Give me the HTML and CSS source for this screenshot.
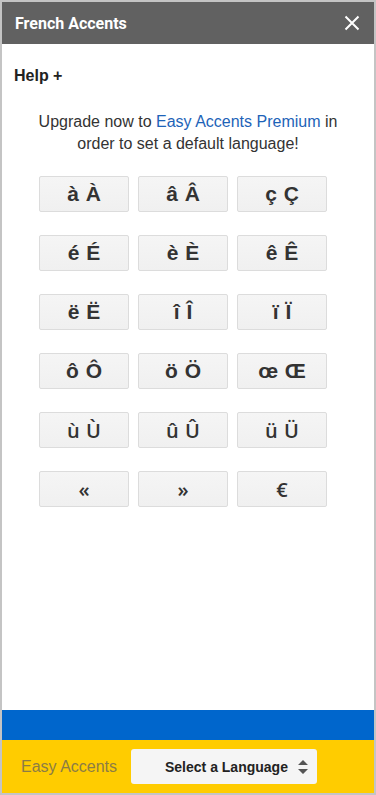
FILE: index.html
```html
<!DOCTYPE html>
<html>
<head>
<meta charset="utf-8">
<link rel="stylesheet" href="styles.css">
</head>
<body>
<div class="frame">
  <header class="header">
    <span class="title">French Accents</span>
    <svg class="close" width="16" height="16" viewBox="0 0 16 16"><path d="M1.5 1.5 L14.5 14.5 M14.5 1.5 L1.5 14.5" stroke="#fff" stroke-width="2" fill="none"/></svg>
  </header>
  <main class="content">
    <div class="help">Help +</div>
    <p class="upgrade">Upgrade now to <span class="link">Easy Accents Premium</span> in order to set a default language!</p>
    <div class="grid">
      <button class="key">à À</button>
      <button class="key">â Â</button>
      <button class="key">ç Ç</button>
      <button class="key">é É</button>
      <button class="key">è È</button>
      <button class="key">ê Ê</button>
      <button class="key">ë Ë</button>
      <button class="key">î Î</button>
      <button class="key">ï Ï</button>
      <button class="key">ô Ô</button>
      <button class="key">ö Ö</button>
      <button class="key">œ Œ</button>
      <button class="key alt">ù Ù</button>
      <button class="key alt">û Û</button>
      <button class="key alt">ü Ü</button>
      <button class="key alt">«</button>
      <button class="key alt">»</button>
      <button class="key alt">€</button>
    </div>
  </main>
  <div class="blue"></div>
  <footer class="footer">
    <span class="brand">Easy Accents</span>
    <div class="select">
      <span>Select a Language</span>
      <svg class="arrows" width="10" height="14" viewBox="0 0 10 14"><path d="M5 0 L10 5 L0 5 Z M0 9 L10 9 L5 14 Z" fill="#555"/></svg>
    </div>
  </footer>
</div>
</body>
</html>
```
FILE: styles.css
```css
* { box-sizing: border-box; }
html, body { margin: 0; padding: 0; background: #fff; }
body { font-family: "Liberation Sans", Arial, sans-serif; }
.frame {
  width: 376px;
  height: 795px;
  border: 2px solid #c4c4c4;
  display: flex;
  flex-direction: column;
  background: #fff;
}
.header {
  height: 42px;
  background: #616161;
  display: flex;
  align-items: center;
  justify-content: space-between;
  padding: 0 14px 0 13px;
  flex-shrink: 0;
}
.title {
  color: #fff;
  font-family: Roboto, "Liberation Sans", sans-serif;
  font-weight: bold;
  font-size: 16px;
}
.close { display: block; }
.content {
  flex: 1;
  padding: 23px 0 0 0;
}
.help {
  font-weight: bold;
  font-size: 16px;
  color: #222;
  padding-left: 12px;
  line-height: 18px;
}
.upgrade {
  margin: 26px 24px 0 24px;
  text-align: center;
  font-size: 16px;
  line-height: 22px;
  color: #333;
}
.link { color: #1d63b8; }
.grid {
  display: grid;
  grid-template-columns: repeat(3, 90px);
  column-gap: 9px;
  row-gap: 23px;
  padding-left: 37px;
  margin-top: 21px;
}
.key {
  height: 36px;
  background: linear-gradient(#f5f5f5, #f0f0f0);
  border: 1px solid #dcdcdc;
  border-radius: 2px;
  font-family: "Liberation Sans", Arial, sans-serif;
  font-weight: bold;
  font-size: 21px;
  color: #333;
  padding: 0;
  word-spacing: 1px;
}
.key.alt {
  font-family: "Open Sans", sans-serif;
  font-weight: 600;
  font-size: 20px;
}
.blue {
  height: 30px;
  background: #0066cc;
  flex-shrink: 0;
}
.footer {
  height: 53px;
  background: #ffcc00;
  display: flex;
  align-items: center;
  flex-shrink: 0;
  padding-left: 19px;
}
.brand {
  font-size: 16px;
  color: #8c7c45;
  width: 110px;
}
.select {
  width: 186px;
  height: 35px;
  background: #f5f5f5;
  border-radius: 3px;
  display: flex;
  align-items: center;
  justify-content: space-between;
  padding: 0 9px 0 34px;
  font-weight: bold;
  font-size: 14px;
  color: #222;
}
.arrows { display: block; }
```
